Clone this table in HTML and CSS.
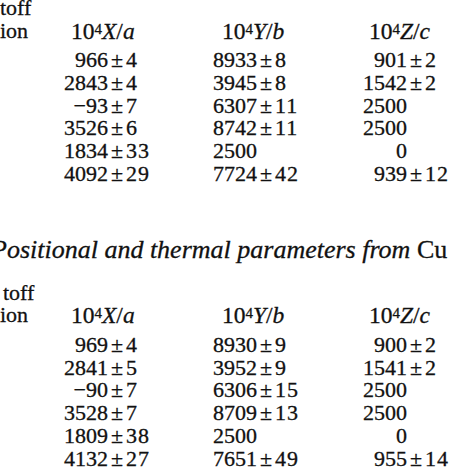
FILE: index.html
```html
<!DOCTYPE html>
<html>
<head>
<meta charset="utf-8">
<link rel="stylesheet" href="styles.css">
</head>
<body>
<div class="page">
  <div class="tbl t1">
    <div class="lab">toff</div><div></div><div></div><div></div>
    <div class="lab">ion</div>
    <div class="hd hx">10<sup>4</sup><i>X</i>/<i>a</i></div>
    <div class="hd hy">10<sup>4</sup><i>Y</i>/<i>b</i></div>
    <div class="hd hz">10<sup>4</sup><i>Z</i>/<i>c</i></div>

    <div></div><div class="c"><span class="n">966</span><span class="pm">±</span><span class="e">4</span></div><div class="c"><span class="n">8933</span><span class="pm">±</span><span class="e">8</span></div><div class="c"><span class="n">901</span><span class="pm">±</span><span class="e">2</span></div>
    <div></div><div class="c"><span class="n">2843</span><span class="pm">±</span><span class="e">4</span></div><div class="c"><span class="n">3945</span><span class="pm">±</span><span class="e">8</span></div><div class="c"><span class="n">1542</span><span class="pm">±</span><span class="e">2</span></div>
    <div></div><div class="c"><span class="n">−93</span><span class="pm">±</span><span class="e">7</span></div><div class="c"><span class="n">6307</span><span class="pm">±</span><span class="e">11</span></div><div class="c"><span class="n">2500</span></div>
    <div></div><div class="c"><span class="n">3526</span><span class="pm">±</span><span class="e">6</span></div><div class="c"><span class="n">8742</span><span class="pm">±</span><span class="e">11</span></div><div class="c"><span class="n">2500</span></div>
    <div></div><div class="c"><span class="n">1834</span><span class="pm">±</span><span class="e">33</span></div><div class="c"><span class="n">2500</span></div><div class="c"><span class="n">0</span></div>
    <div></div><div class="c"><span class="n">4092</span><span class="pm">±</span><span class="e">29</span></div><div class="c"><span class="n">7724</span><span class="pm">±</span><span class="e">42</span></div><div class="c"><span class="n">939</span><span class="pm">±</span><span class="e">12</span></div>
  </div>

  <div class="caption"><i>Positional and thermal parameters from</i> Cu</div>

  <div class="tbl t2">
    <div class="lab lab2">toff</div><div></div><div></div><div></div>
    <div class="lab">ion</div>
    <div class="hd hx">10<sup>4</sup><i>X</i>/<i>a</i></div>
    <div class="hd hy">10<sup>4</sup><i>Y</i>/<i>b</i></div>
    <div class="hd hz">10<sup>4</sup><i>Z</i>/<i>c</i></div>

    <div></div><div class="c"><span class="n">969</span><span class="pm">±</span><span class="e">4</span></div><div class="c"><span class="n">8930</span><span class="pm">±</span><span class="e">9</span></div><div class="c"><span class="n">900</span><span class="pm">±</span><span class="e">2</span></div>
    <div></div><div class="c"><span class="n">2841</span><span class="pm">±</span><span class="e">5</span></div><div class="c"><span class="n">3952</span><span class="pm">±</span><span class="e">9</span></div><div class="c"><span class="n">1541</span><span class="pm">±</span><span class="e">2</span></div>
    <div></div><div class="c"><span class="n">−90</span><span class="pm">±</span><span class="e">7</span></div><div class="c"><span class="n">6306</span><span class="pm">±</span><span class="e">15</span></div><div class="c"><span class="n">2500</span></div>
    <div></div><div class="c"><span class="n">3528</span><span class="pm">±</span><span class="e">7</span></div><div class="c"><span class="n">8709</span><span class="pm">±</span><span class="e">13</span></div><div class="c"><span class="n">2500</span></div>
    <div></div><div class="c"><span class="n">1809</span><span class="pm">±</span><span class="e">38</span></div><div class="c"><span class="n">2500</span></div><div class="c"><span class="n">0</span></div>
    <div></div><div class="c"><span class="n">4132</span><span class="pm">±</span><span class="e">27</span></div><div class="c"><span class="n">7651</span><span class="pm">±</span><span class="e">49</span></div><div class="c"><span class="n">955</span><span class="pm">±</span><span class="e">14</span></div>
  </div>
</div>
</body>
</html>
```

FILE: styles.css
```css
html, body {
  margin: 0;
  padding: 0;
  background: #ffffff;
}
body {
  width: 474px;
  height: 474px;
  overflow: hidden;
}
.page {
  font-family: "Liberation Serif", "Times New Roman", serif;
  font-size: 22px;
  line-height: 22.8px;
  color: #111111;
  -webkit-text-stroke: 0.3px #111111;
  display: flex;
  flex-direction: column;
}
.tbl {
  display: grid;
  grid-template-columns: 63px 149px 150px 112px;
  white-space: nowrap;
}
.t1 {
  margin-top: -3px;
}
.t2 {
  margin-top: 18px;
}
.lab2 {
  padding-left: 3px;
}
.hd {
  font-size: 23.5px;
  padding-bottom: 6.5px;
}
.hx { padding-left: 8px; }
.hy { padding-left: 10px; }
.hz { padding-left: 7px; }
.hd sup {
  font-size: 15px;
  line-height: 0;
  vertical-align: 5px;
}
.n {
  display: inline-block;
  width: 45px;
  text-align: right;
}
.pm {
  margin: 0 3px 0 3px;
}
.e {
  letter-spacing: 1px;
}
.caption {
  font-size: 26px;
  margin-top: 53px;
  margin-bottom: 2px;
  margin-left: -9px;
  white-space: nowrap;
}
```
